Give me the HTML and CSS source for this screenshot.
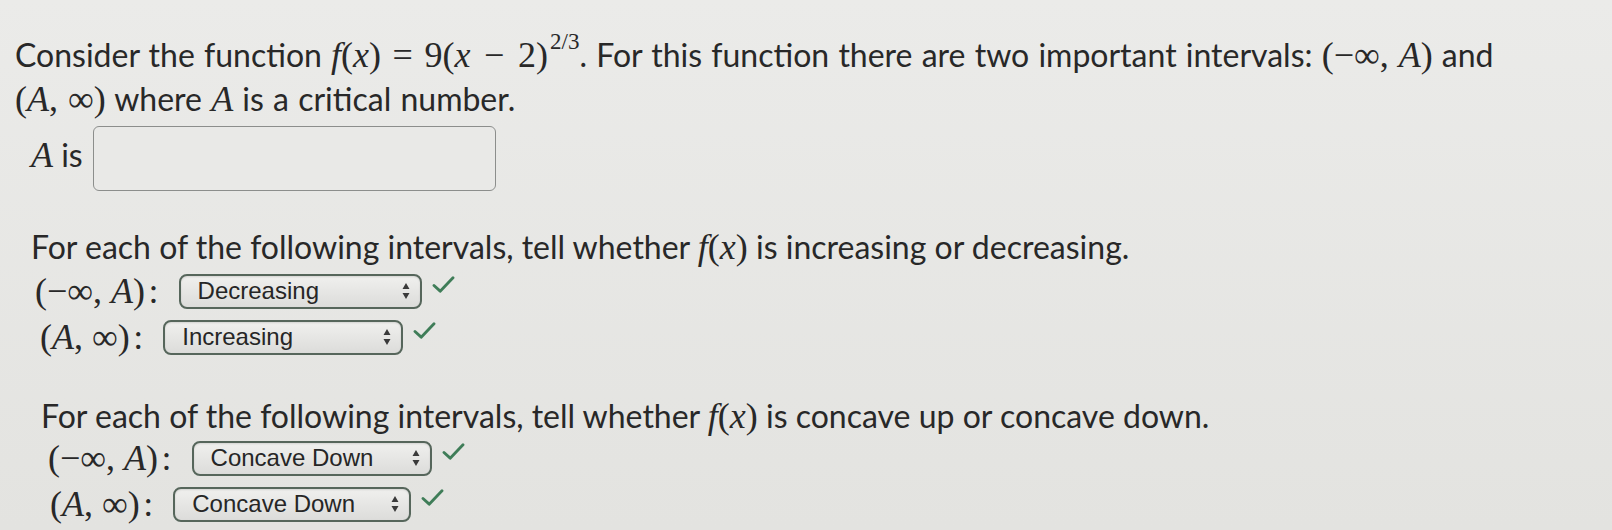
FILE: index.html
```html
<!DOCTYPE html>
<html>
<head>
<meta charset="utf-8">
<link rel="stylesheet" href="styles.css">
</head>
<body>
<div class="page">
  <p class="intro">Consider the function <span class="m"><i>f</i>(<i>x</i>)<span class="rel">=</span>9(<i>x</i><span class="bin">−</span>2)<sup>2/3</sup></span>. For this function there are two important intervals: <span class="m">(−∞, <i>A</i>)</span> and<br><span class="m">(<i>A</i>, ∞)</span> where <span class="m"><i>A</i></span> is a critical number.</p>

  <div class="answer">
    <span class="label"><span class="m"><i>A</i></span> is</span>
    <div class="box"></div>
  </div>

  <p class="q q1">For each of the following intervals, tell whether <span class="m"><i>f</i>(<i>x</i>)</span> is increasing or decreasing.</p>
  <div class="row r1">
    <span class="m lab">(−∞, <i>A</i>)<span class="col">:</span></span>
    <div class="sel w1"><span>Decreasing</span><svg class="arr" viewBox="0 0 8 18"><path d="M4 1 L7.5 7 H0.5 Z M4 17 L7.5 11 H0.5 Z"/></svg></div>
    <svg class="chk" viewBox="0 0 24 20"><path d="M2 11 L8.5 17 L22 3"/></svg>
  </div>
  <div class="row r2">
    <span class="m lab">(<i>A</i>, ∞)<span class="col">:</span></span>
    <div class="sel w2"><span>Increasing</span><svg class="arr" viewBox="0 0 8 18"><path d="M4 1 L7.5 7 H0.5 Z M4 17 L7.5 11 H0.5 Z"/></svg></div>
    <svg class="chk" viewBox="0 0 24 20"><path d="M2 11 L8.5 17 L22 3"/></svg>
  </div>

  <p class="q q2">For each of the following intervals, tell whether <span class="m"><i>f</i>(<i>x</i>)</span> is concave up or concave down.</p>
  <div class="row r3">
    <span class="m lab">(−∞, <i>A</i>)<span class="col">:</span></span>
    <div class="sel w3"><span>Concave Down</span><svg class="arr" viewBox="0 0 8 18"><path d="M4 1 L7.5 7 H0.5 Z M4 17 L7.5 11 H0.5 Z"/></svg></div>
    <svg class="chk" viewBox="0 0 24 20"><path d="M2 11 L8.5 17 L22 3"/></svg>
  </div>
  <div class="row r4">
    <span class="m lab">(<i>A</i>, ∞)<span class="col">:</span></span>
    <div class="sel w4"><span>Concave Down</span><svg class="arr" viewBox="0 0 8 18"><path d="M4 1 L7.5 7 H0.5 Z M4 17 L7.5 11 H0.5 Z"/></svg></div>
    <svg class="chk" viewBox="0 0 24 20"><path d="M2 11 L8.5 17 L22 3"/></svg>
  </div>
</div>
</body>
</html>
```

FILE: styles.css
```css
html, body {
  margin: 0;
  padding: 0;
  min-height: 100%;
  background: linear-gradient(#ebebe9, #e3e3e0);
}
.page {
  padding: 33px 0 0 15px;
  font-family: Lato, "Open Sans", sans-serif;
  font-size: 32px;
  color: #282828;
}
.intro {
  margin: 0;
  line-height: 44px;
  width: 1590px;
  word-spacing: 1px;
}
.m {
  font-family: "Liberation Serif", "DejaVu Serif", serif;
  font-size: 36px;
  white-space: nowrap;
}
.m i {
  font-style: italic;
}
.rel {
  margin: 0 0.32em;
}
.bin {
  margin: 0 0.38em;
}
.col {
  margin-left: 0.1em;
}
sup {
  font-size: 23px;
  line-height: 1;
  vertical-align: 0;
  position: relative;
  top: -18px;
  margin-left: 2px;
}
.answer {
  display: flex;
  align-items: center;
  gap: 10px;
  margin: 5px 0 0 16px;
}
.label {
  margin-bottom: 8px;
}
.box {
  width: 401px;
  height: 63px;
  border: 1.5px solid #8c8e8c;
  border-radius: 6px;
  background: #e9e9e7;
}
.q {
  margin: 0;
  line-height: 42px;
}
.q1 {
  margin: 35px 0 0 16px;
}
.q2 {
  margin: 35px 0 0 26px;
}
.row {
  display: flex;
  align-items: center;
  height: 46px;
}
.r1 { margin-left: 20px; }
.r2 { margin-left: 25px; }
.r3 { margin-left: 33px; margin-top: -2px; }
.r4 { margin-left: 35px; }
.sel {
  display: flex;
  align-items: center;
  justify-content: space-between;
  height: 35px;
  box-sizing: border-box;
  border: 2px solid #56665b;
  border-radius: 8px;
  padding: 0 10px 0 17px;
  background: linear-gradient(#f0f0ee, #dcdcda);
  box-shadow: inset 0 1px 2px rgba(0, 0, 0, 0.12);
  font-family: "Liberation Sans", Arial, sans-serif;
  font-size: 24px;
  color: #262626;
  margin-left: 20px;
}
.w1 { width: 243px; }
.w2 { width: 240px; }
.w3 { width: 240px; }
.w4 { width: 238px; }
.arr {
  width: 8px;
  height: 18px;
  fill: #3a3a3a;
}
.chk {
  width: 23px;
  height: 19px;
  margin-left: 10px;
  margin-top: -14px;
  fill: none;
  stroke: #3f7d58;
  stroke-width: 3;
  stroke-linecap: round;
  stroke-linejoin: round;
}
```
